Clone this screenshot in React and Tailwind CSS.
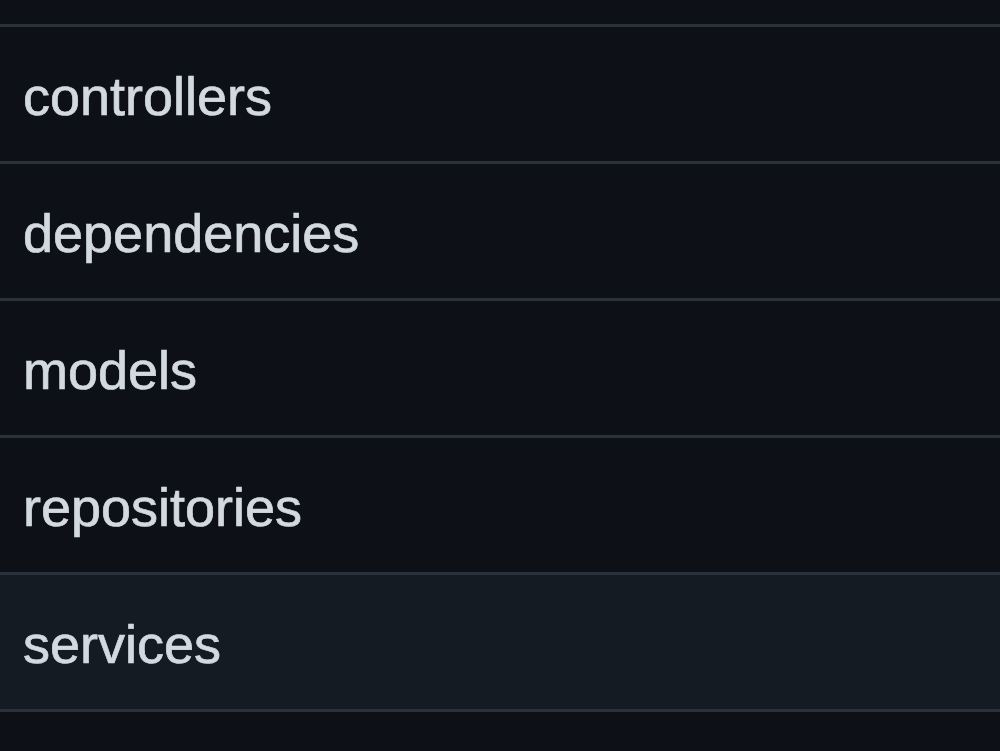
export default function App() {
  const rows = [
    { name: "controllers", hover: false },
    { name: "dependencies", hover: false },
    { name: "models", hover: false },
    { name: "repositories", hover: false },
    { name: "services", hover: true },
  ];
  return (
    <div
      className="w-[1000px] h-[751px] overflow-hidden bg-[#0d1117]"
      style={{ fontFamily: '"Liberation Sans", Arial, sans-serif' }}
    >
      <div className="h-[24px]" />
      {rows.map((r) => (
        <div
          key={r.name}
          className={
            r.hover
              ? "h-[137px] border-t-[3px] border-[#2b313b] bg-[#151b23] flex items-center pl-[23px]"
              : "h-[137px] border-t-[3px] border-[#2b313b] flex items-center pl-[23px]"
          }
        >
          <span className="text-[54px] leading-none text-[#d3d9e0] mt-[4px] [-webkit-text-stroke:0.7px_#d3d9e0]">{r.name}</span>
        </div>
      ))}
      <div className="border-t-[3px] border-[#2b313b] h-[60px]" />
    </div>
  );
}
